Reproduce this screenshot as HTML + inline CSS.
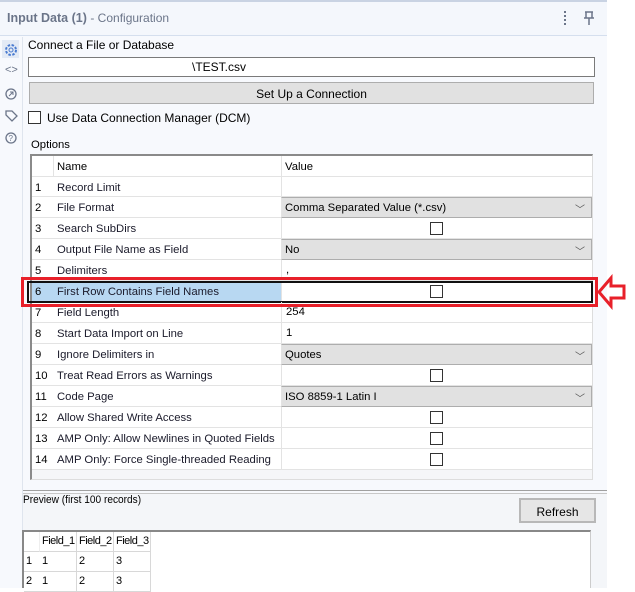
<!DOCTYPE html>
<html><head><style>
*{box-sizing:border-box;margin:0;padding:0}
body{width:635px;height:588px;background:#fff;font-family:"Liberation Sans",sans-serif;font-size:11.3px;color:#000;position:relative;overflow:hidden}
.a{position:absolute}
.row{position:absolute;left:32px;width:560px;height:21px;border-bottom:1px solid #e3e3e3}
.row .n{position:absolute;left:3px;top:5px}
.row .t{position:absolute;left:25px;top:5px;color:#1a1a2a;white-space:nowrap}
.row .v{position:absolute;left:249px;top:0;width:311px;height:21px;border-left:1px solid #e3e3e3}
.dd{background:#e1e1e1;border:1px solid #adadad;height:21px;padding:4px 3px}
.cb{position:absolute;width:13px;height:13px;border:1px solid #333;background:#fff}
.chev{position:absolute;right:6px;top:3px;font-size:10px;color:#555}
.pc{position:absolute;border-right:1px solid #d8d8d8;border-bottom:1px solid #d8d8d8;height:20px;padding:3px 2px;font-size:11px;letter-spacing:-0.5px;white-space:nowrap;overflow:hidden}
</style></head><body>
<div class="a" style="left:0;top:0;width:607px;height:588px;background:#f7f9fd"></div>
<div class="a" style="left:0;top:0;width:607px;height:2px;background:#c9d3e3"></div>
<div class="a" style="left:0;top:2px;width:607px;height:34px;background:#f4f7fc;border-bottom:1px solid #d5dfee"></div>
<div class="a" style="left:7px;top:11px;font-size:12.5px;color:#6b7589"><b>Input Data (1)</b> <span style="font-size:12px">- Configuration</span></div>
<div class="a" style="left:564px;top:11px;width:3px;height:14px;border-left:2px dotted #6b7589"></div>
<svg class="a" style="left:583px;top:11px" width="12" height="14"><path d="M2 1h8M3 1v6M9 1v6M1 7h10M6 7v7" stroke="#6b7589" stroke-width="1.5" fill="none"/></svg>
<div class="a" style="left:22px;top:37px;width:1px;height:551px;background:#dfe5ee"></div>
<div class="a" style="left:2px;top:40px;width:17px;height:18px;background:#e3eaf5"></div>
<svg class="a" style="left:3px;top:42px" width="16" height="16"><circle cx="8" cy="8" r="5" stroke="#4a7bd0" stroke-width="2" fill="none" stroke-dasharray="2.5 1.5"/><circle cx="8" cy="8" r="2" stroke="#4a7bd0" fill="none"/></svg>
<div class="a" style="left:5px;top:64px;font-size:11px;color:#6b7589">&lt;&gt;</div>
<svg class="a" style="left:4px;top:87px" width="14" height="14"><circle cx="7" cy="7" r="5" stroke="#6b7589" fill="none" stroke-width="1.3"/><path d="M5 9l4-4M6 5h3v3" stroke="#6b7589" fill="none"/></svg>
<svg class="a" style="left:4px;top:109px" width="14" height="14"><path d="M2 2h6l5 5-5 5-6-6z" stroke="#6b7589" fill="none" stroke-width="1.3"/></svg>
<svg class="a" style="left:4px;top:131px" width="14" height="14"><circle cx="7" cy="7" r="5" stroke="#6b7589" fill="none" stroke-width="1.3"/><text x="4.5" y="10" font-size="8" fill="#6b7589" font-family="Liberation Sans">?</text></svg>

<div class="a" style="left:28px;top:38px;font-size:12px">Connect a File or Database</div>
<div class="a" style="left:28px;top:57px;width:567px;height:20px;border:1px solid #7a7a7a;background:#fff"></div>
<div class="a" style="left:192px;top:60px;font-size:12px">\TEST.csv</div>
<div class="a" style="left:29px;top:82px;width:565px;height:22px;border:1px solid #adadad;background:#e1e1e1;text-align:center;padding-top:4px;font-size:12px">Set Up a Connection</div>
<div class="cb" style="left:28px;top:111px"></div>
<div class="a" style="left:47px;top:111px;font-size:12px">Use Data Connection Manager (DCM)</div>
<div class="a" style="left:31px;top:139px">Options</div>

<div class="a" style="left:30px;top:154px;width:563px;height:326px;border:2px solid #8a8a8a;border-right:1px solid #ddd;border-bottom:1px solid #ddd;background:#fff"></div>
<div class="a" style="left:32px;top:470px;width:560px;height:9px;background:#f5f6f8"></div>
<div class="a" style="left:53px;top:156px;width:1px;height:20px;background:#e3e3e3"></div>
<div class="a" style="left:57px;top:161px">Name</div>
<div class="a" style="left:281px;top:156px;width:1px;height:20px;background:#e3e3e3"></div>
<div class="a" style="left:285px;top:161px">Value</div>

<div class="row" style="top:176px;border-top:1px solid #e3e3e3"><span class="n">1</span><span class="t">Record Limit</span><div class="v"></div></div>
<div class="row" style="top:197px"><span class="n">2</span><span class="t">File Format</span><div class="v dd">Comma Separated Value (*.csv)<span class="chev">﹀</span></div></div>
<div class="row" style="top:218px"><span class="n">3</span><span class="t">Search SubDirs</span><div class="v"><div class="cb" style="left:148px;top:4px"></div></div></div>
<div class="row" style="top:239px"><span class="n">4</span><span class="t">Output File Name as Field</span><div class="v dd">No<span class="chev">﹀</span></div></div>
<div class="row" style="top:260px"><span class="n">5</span><span class="t">Delimiters</span><div class="v" style="padding:4px 4px">,</div></div>
<div class="row" style="top:281px"><div class="a" style="left:0;top:0;width:249px;height:21px;background:#b8d8f2"></div><span class="n">6</span><span class="t">First Row Contains Field Names</span><div class="v" style="background:#fff"><div class="cb" style="left:148px;top:4px"></div></div></div>
<div class="a" style="left:27px;top:281px;width:566px;height:22px;border:2px solid #111"></div>
<div class="row" style="top:302px"><span class="n">7</span><span class="t">Field Length</span><div class="v" style="padding:4px 4px">254</div></div>
<div class="row" style="top:323px"><span class="n">8</span><span class="t">Start Data Import on Line</span><div class="v" style="padding:4px 4px">1</div></div>
<div class="row" style="top:344px"><span class="n">9</span><span class="t">Ignore Delimiters in</span><div class="v dd">Quotes<span class="chev">﹀</span></div></div>
<div class="row" style="top:365px"><span class="n">10</span><span class="t">Treat Read Errors as Warnings</span><div class="v"><div class="cb" style="left:148px;top:4px"></div></div></div>
<div class="row" style="top:386px"><span class="n">11</span><span class="t">Code Page</span><div class="v dd">ISO 8859-1 Latin I<span class="chev">﹀</span></div></div>
<div class="row" style="top:407px"><span class="n">12</span><span class="t">Allow Shared Write Access</span><div class="v"><div class="cb" style="left:148px;top:4px"></div></div></div>
<div class="row" style="top:428px"><span class="n">13</span><span class="t">AMP Only: Allow Newlines in Quoted Fields</span><div class="v"><div class="cb" style="left:148px;top:4px"></div></div></div>
<div class="row" style="top:449px"><span class="n">14</span><span class="t">AMP Only: Force Single-threaded Reading</span><div class="v"><div class="cb" style="left:148px;top:4px"></div></div></div>

<div class="a" style="left:21px;top:277px;width:577px;height:30px;border:3px solid #e8202a"></div>
<svg class="a" style="left:596px;top:274px" width="32" height="36"><path d="M3 18L15 4v8h13v12H15v8z" stroke="#e8202a" stroke-width="3" fill="none" stroke-linejoin="miter"/></svg>

<div class="a" style="left:23px;top:490px;width:584px;height:1px;background:#a0a0a0"></div>
<div class="a" style="left:23px;top:493px;width:584px;height:1px;background:#c8c8c8"></div>
<div class="a" style="left:23px;top:494px;width:584px;height:94px;background:#f4f6f9"></div>
<div class="a" style="left:23px;top:494px;font-size:11px;transform:scaleX(.92);transform-origin:left">Preview (first 100 records)</div>
<div class="a" style="left:519px;top:498px;width:77px;height:25px;border:2px solid #b8b8b8;background:#e6e6e6;text-align:center;padding-top:5px;font-size:12px">Refresh</div>
<div class="a" style="left:22px;top:530px;width:569px;height:58px;border:2px solid #888;border-right:1px solid #ccc;border-bottom:none;background:#fff"></div>
<div class="pc" style="left:24px;top:532px;width:16px;border-right:1px solid #eee"></div>
<div class="pc" style="left:40px;top:532px;width:37px">Field_1</div>
<div class="pc" style="left:77px;top:532px;width:37px">Field_2</div>
<div class="pc" style="left:114px;top:532px;width:37px">Field_3</div>
<div class="pc" style="left:24px;top:552px;width:16px;border-right:none">1</div>
<div class="pc" style="left:40px;top:552px;width:37px">1</div>
<div class="pc" style="left:77px;top:552px;width:37px">2</div>
<div class="pc" style="left:114px;top:552px;width:37px">3</div>
<div class="pc" style="left:24px;top:572px;width:16px;border-right:none">2</div>
<div class="pc" style="left:40px;top:572px;width:37px">1</div>
<div class="pc" style="left:77px;top:572px;width:37px">2</div>
<div class="pc" style="left:114px;top:572px;width:37px">3</div>
</body></html>
